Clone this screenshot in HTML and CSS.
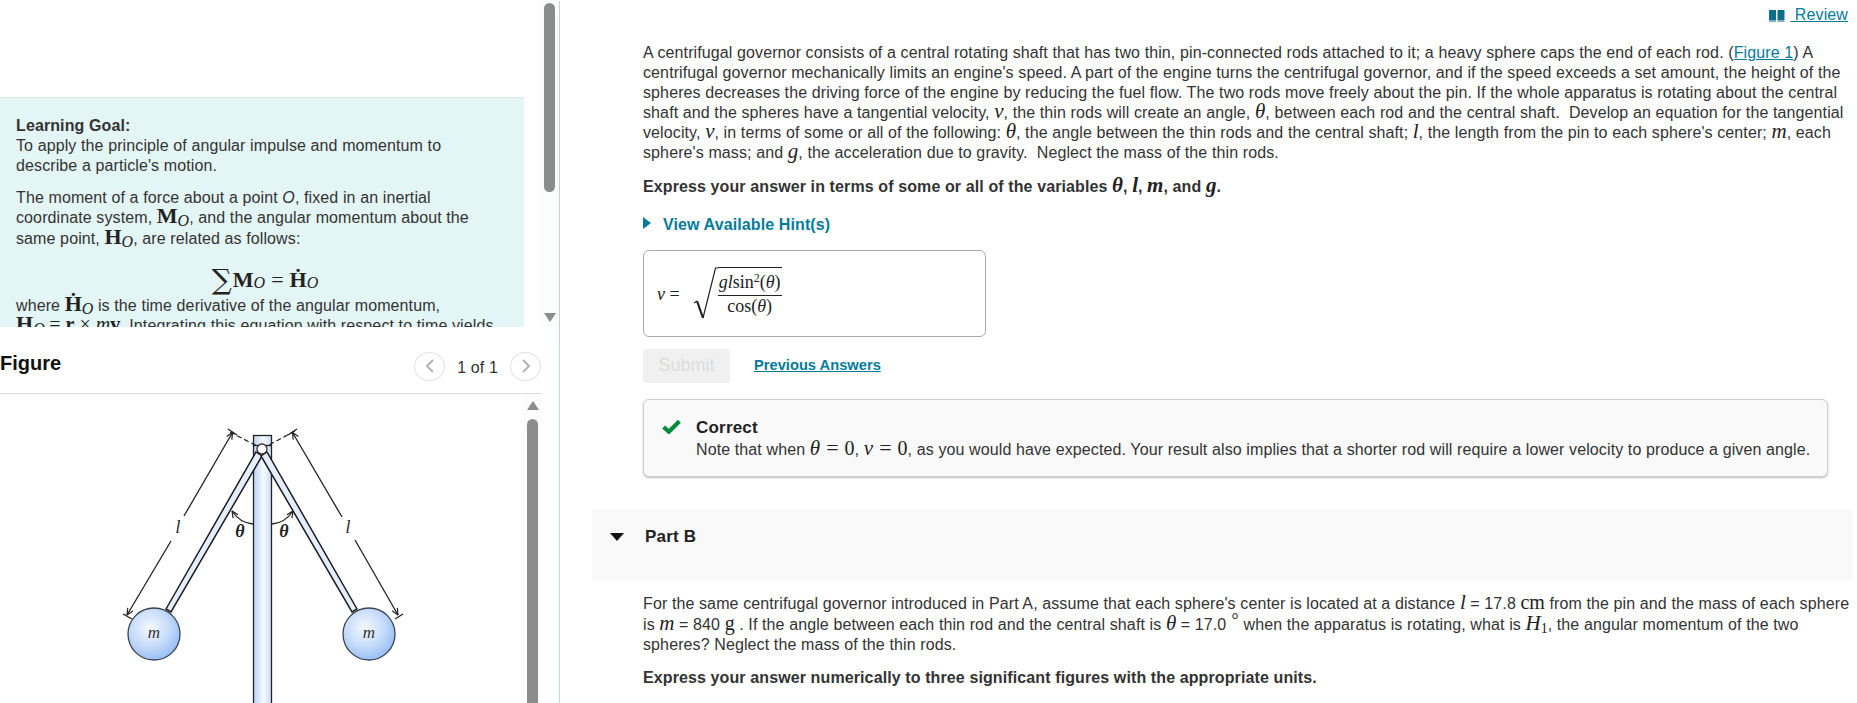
FILE: index.html
```html
<!DOCTYPE html>
<html lang="en">
<head>
<meta charset="utf-8">
<title>Centrifugal governor</title>
<link rel="stylesheet" href="styles.css">
</head>
<body>
<div class="app">
  <aside class="left">
    <section class="intro">
      <div class="intro-scroll">
        <div class="goal">
          <p class="goal-first"><b>Learning Goal:</b><br>To apply the principle of angular impulse and momentum to<br>describe a particle's motion.</p>
          <p class="goal-second">The moment of a force about a point <i>O</i>, fixed in an inertial<br>coordinate system, <span class="m mb">M</span><span class="m sub">O</span>, and the angular momentum about the<br>same point, <span class="m mb tall">H</span><span class="m sub">O</span>, are related as follows:</p>
          <div class="equation"><span class="sum">∑</span><span class="m mb">M</span><span class="m sub">O</span><span class="m eq">=</span><span class="m mb">Ḣ</span><span class="m sub">O</span></div>
          <p class="goal-third">where <span class="m mb">Ḣ</span><span class="m sub">O</span> is the time derivative of the angular momentum,<br><span class="m mb">H</span><span class="m sub">O</span> <span class="m">= <b>r</b> × <i>m</i><b>v</b></span>. Integrating this equation with respect to time yields</p>
        </div>
      </div>
      <div class="track track-down">
        <div class="thumb thumb-top"></div>
        <div class="arrow-down"></div>
      </div>
    </section>
    <section class="figure-panel">
      <header class="figure-head">
        <h2 class="figure-title">Figure</h2>
        <div class="pager">
          <span class="pager-btn"><svg class="chev" viewBox="0 0 12 16"><path d="M9 2 3 8l6 6"/></svg></span>
          <span class="pager-text">1 of 1</span>
          <span class="pager-btn"><svg class="chev" viewBox="0 0 12 16"><path d="M3 2l6 6-6 6"/></svg></span>
        </div>
      </header>
      <div class="figure-body">
        <svg class="diagram" viewBox="0 393 523 310" width="523" height="310">
          <defs>
            <linearGradient id="shaft" x1="0" x2="1" y1="0" y2="0">
              <stop offset="0" stop-color="#bcd3f5"/><stop offset=".55" stop-color="#f6faff"/><stop offset="1" stop-color="#c8dbf7"/>
            </linearGradient>
            <radialGradient id="ball" cx=".42" cy=".38" r=".68">
              <stop offset="0" stop-color="#f4f8ff"/><stop offset=".55" stop-color="#c5dbfa"/><stop offset="1" stop-color="#8fb9f2"/>
            </radialGradient>
            <marker id="tip" viewBox="0 0 8 8" refX="7.500" refY="4" markerWidth="8" markerHeight="8" orient="auto-start-reverse" markerUnits="userSpaceOnUse">
              <path class="tip" d="M1 1 7.500 4 1 7"/>
            </marker>
          </defs>
          <rect class="shaft" x="253.500" y="434.500" width="18" height="280"/>
          <path class="thin" d="M253.500 444.500h18"/>
          <path class="dash" d="M230 431 257 445M295 430 267 445"/>
          <path class="thin" d="M228 428 237 434M297 428 288 434M123 613l9 5M403 613l-8 5"/>
          <path class="thin" marker-start="url(#tip)" d="M232.500 431.500 184 515"/>
          <path class="thin" marker-end="url(#tip)" d="M171 540 127 614"/>
          <path class="thin" marker-start="url(#tip)" d="M292.500 431.500 342 516"/>
          <path class="thin" marker-end="url(#tip)" d="M355 539 398 614"/>
          <path class="thin" marker-end="url(#tip)" d="M253 523Q240 522 232 510"/>
          <path class="thin" marker-end="url(#tip)" d="M272 523Q285 522 293 510"/>
          <polygon class="rod" points="166,608 256,451 262,455 171,611"/>
          <polygon class="rod" points="357,608 267,451 261,455 352,611"/>
          <circle class="pin" cx="262" cy="448" r="5"/>
          <circle class="ball" cx="154" cy="633" r="26"/>
          <circle class="ball" cx="369" cy="633" r="26"/>
          <text class="lab lab-m" x="154" y="637">m</text>
          <text class="lab lab-m" x="369" y="637">m</text>
          <text class="lab lab-l" x="178" y="532">l</text>
          <text class="lab lab-l" x="348" y="532">l</text>
          <text class="lab lab-b" x="240" y="536">θ</text>
          <text class="lab lab-b" x="284" y="536">θ</text>
        </svg>
        <div class="track track-up">
          <div class="arrow-up"></div>
          <div class="thumb thumb-fig"></div>
        </div>
      </div>
    </section>
  </aside>
  <div class="divider"></div>
  <main class="right">
    <div class="review-row">
      <a class="review">
        <svg class="book" viewBox="0 0 16 13"><path d="M0 1h7v10.500H0zM8.500 1h7v10.500h-7z"/><path d="M0 12h7v1H0zM8.500 12h7v1h-7z" opacity=".55"/></svg>
        <span class="link">&nbsp;Review</span>
      </a>
    </div>
    <p class="text">A centrifugal governor consists of a central rotating shaft that has two thin, pin-connected rods attached to it; a heavy sphere caps the end of each rod. (<a class="link">Figure 1</a>) A<br>centrifugal governor mechanically limits an engine's speed. A part of the engine turns the centrifugal governor, and if the speed exceeds a set amount, the height of the<br>spheres decreases the driving force of the engine by reducing the fuel flow. The two rods move freely about the pin. If the whole apparatus is rotating about the central<br>shaft and the spheres have a tangential velocity, <span class="m mi">v</span>, the thin rods will create an angle, <span class="m mi">θ</span>, between each rod and the central shaft.&nbsp; Develop an equation for the tangential<br>velocity, <span class="m mi">v</span>, in terms of some or all of the following: <span class="m mi">θ</span>, the angle between the thin rods and the central shaft; <span class="m mi">l</span>, the length from the pin to each sphere's center; <span class="m mi">m</span>, each<br>sphere's mass; and <span class="m mi">g</span>, the acceleration due to gravity.&nbsp; Neglect the mass of the thin rods.</p>
    <p class="express">Express your answer in terms of some or all of the variables <span class="m mi">θ</span>, <span class="m mi">l</span>, <span class="m mi">m</span>, and <span class="m mi">g</span>.</p>
    <div class="hint"><span class="tri-right"></span><a class="hint-link">View Available Hint(s)</a></div>
    <div class="answer">
      <span class="ans-var"><i>v</i> =</span>
      <span class="radical">
        <svg class="rad-sign" viewBox="0 0 25 56" width="25" height="56"><path class="rad-thin" d="M1 36l3-2"/><path class="rad-thick" d="M4 34l6 17"/><path class="rad-thin" d="M10 51 22.500 1H25"/></svg>
        <span class="fraction">
          <span class="num"><i>gl</i>sin<sup>2</sup>(<i>θ</i>)</span>
          <span class="den">cos(<i>θ</i>)</span>
        </span>
      </span>
    </div>
    <div class="actions">
      <span class="submit">Submit</span>
      <a class="link prev">Previous Answers</a>
    </div>
    <div class="correct">
      <svg class="check" viewBox="0 0 18 14"><path d="M1.500 7.500 6.500 12 16.500 2"/></svg>
      <div class="correct-text">
        <div class="correct-title">Correct</div>
        <div>Note that when <span class="m mi">θ</span> <span class="m eq-s">=</span> <span class="m">0</span>, <span class="m mi">v</span> <span class="m eq-s">=</span> <span class="m">0</span>, as you would have expected. Your result also implies that a shorter rod will require a lower velocity to produce a given angle.</div>
      </div>
    </div>
    <div class="part-band"><span class="tri-down"></span><span class="part-title">Part B</span></div>
    <p class="text part-text">For the same centrifugal governor introduced in Part A, assume that each sphere's center is located at a distance <span class="m mi">l</span> = 17.8 <span class="m">cm</span> from the pin and the mass of each sphere<br>is <span class="m mi">m</span> = 840 <span class="m">g</span> . If the angle between each thin rod and the central shaft is <span class="m mi">θ</span> = 17.0 <span class="deg">°</span> when the apparatus is rotating, what is <span class="m mi tall">H</span><span class="m sub1">1</span>, the angular momentum of the two<br>spheres? Neglect the mass of the thin rods.</p>
    <p class="express express-b">Express your answer numerically to three significant figures with the appropriate units.</p>
  </main>
</div>
</body>
</html>
```
FILE: styles.css
```css
* { box-sizing: border-box; }
html, body { margin: 0; height: 100%; background: #fff; overflow: hidden; }
body { font: 16px/20px "Liberation Sans", Arial, sans-serif; color: #333; letter-spacing: .11px; }
p { margin: 0; }
a { text-decoration: none; }

.app { display: flex; height: 703px; overflow: hidden; }

/* left column */
.left { width: 558px; flex: none; display: flex; flex-direction: column; }
.divider { width: 2px; flex: none; background: linear-gradient(to bottom, #fff 0, #fff 1px, #c8ced8 1px, #c8ced8 343px, #c5d8ef 343px); background-size: 1px 100%; background-repeat: no-repeat; background-position: right top; }

.intro { height: 327px; display: flex; overflow: hidden; flex: none; }
.intro-scroll { width: 540px; padding: 97px 16px 0 0; flex: none; }
.goal { height: 240px; background: #e4f5f6; border-top: 1px solid #dfe9ea; padding: 18px 10px 0 16px; }
.goal-second { margin-top: 12px; }
.equation { display: flex; justify-content: center; align-items: center; height: 20px; margin: 21px 0 0; color: #222; }
.goal-third { margin-top: 6px; }

.track { width: 19px; flex: none; background: #fcfcfc; display: flex; flex-direction: column; align-items: center; }
.track-down { height: 327px; justify-content: space-between; padding: 3px 0 5px; }
.thumb { width: 11px; border-radius: 6px; background: #8c8c8c; }
.thumb-top { height: 189px; }
.thumb-fig { flex: 1; border-radius: 6px 6px 0 0; margin-top: 9px; }
.arrow-down { width: 0; height: 0; border: 6px solid transparent; border-top: 9px solid #8c8c8c; border-bottom: 0; }
.arrow-up { width: 0; height: 0; border: 6px solid transparent; border-bottom: 9px solid #8c8c8c; border-top: 0; }

.figure-panel { flex: 1; width: 542px; display: flex; flex-direction: column; min-height: 0; }
.figure-head { height: 67px; flex: none; display: flex; justify-content: space-between; align-items: center; border-bottom: 1px solid #ddd; padding: 8px 1px 0 0; background: #fff; }
.figure-title { margin: 0 0 3px; font-size: 20px; line-height: 24px; font-weight: 700; color: #111; letter-spacing: 0; }
.pager { display: flex; align-items: center; gap: 12px; margin-top: 4px; }
.pager-btn { width: 31px; height: 29px; border: 1px solid #e2e2e2; border-radius: 50%; display: flex; align-items: center; justify-content: center; }
.pager-text { color: #333; padding-top: 3px; }
.chev { width: 12px; height: 16px; fill: none; stroke: #b4b4b4; stroke-width: 2; }

.figure-body { flex: 1; display: flex; min-height: 0; }
.diagram { display: block; flex: none; background: #fff; }
.track-up { padding-top: 7px; height: 310px; }
.shaft { fill: url(#shaft); stroke: #222; stroke-width: 1.300; }
.thin { fill: none; stroke: #222; stroke-width: 1.300; }
.dash { fill: none; stroke: #222; stroke-width: 1.200; stroke-dasharray: 5 3; }
.tip { fill: none; stroke: #222; stroke-width: 1.200; }
.rod { fill: #e3edfc; stroke: #1c1c1c; stroke-width: 1.500; }
.pin { fill: #fff; stroke: #333; stroke-width: 1.300; }
.ball { fill: url(#ball); stroke: #3a4350; stroke-width: 1.300; }
.lab { font: italic 15px "Liberation Serif", serif; text-anchor: middle; fill: #333; letter-spacing: 0; }
.lab-m { font-size: 17px; }
.lab-l { font-size: 19px; }
.lab-b { font-size: 18px; font-weight: 700; fill: #222; }

/* right column */
.right { flex: 1; min-width: 0; padding: 0 4px 0 83px; overflow: hidden; }
.review-row { height: 43px; display: flex; justify-content: flex-end; align-items: flex-start; padding: 5px 5px 0 0; }
.review { display: flex; align-items: center; gap: 5px; }
.book { width: 16px; height: 13px; fill: #0b6f8c; }
.link { color: #047b9c; text-decoration: underline; }
.text { width: 1215px; color: #333; }
.m { font-family: "Liberation Serif", "DejaVu Serif", serif; font-size: 20px; line-height: 0; color: #222; letter-spacing: 0; }
.mi { font-style: italic; font-size: 21px; }
.mb { font-weight: 700; font-size: 22px; }
.tall { line-height: 18.500px; }
.sub { font-style: italic; font-size: 16px; position: relative; top: 3px; line-height: 0; }
.sub1 { font-size: 14px; position: relative; top: 3px; }
.eq { margin: 0 6px; font-size: 22px; }
.eq-s { font-size: 22px; margin: 0 1.500px; }
.sum { font: 28px/0 "DejaVu Serif", serif; color: #222; margin-right: 1px; }
.deg { font-size: 20px; line-height: 0; position: relative; top: -2px; color: #444; }

.express { margin-top: 14px; font-weight: 700; color: #333; }
.express-b { margin-top: 13px; }
.hint { margin-top: 18px; display: flex; align-items: center; gap: 12px; height: 20px; }
.tri-right { width: 0; height: 0; border: 6.500px solid transparent; border-left: 8px solid #047b9c; border-right: 0; margin-top: -4px; }
.hint-link { color: #047b9c; font-weight: 700; }

.answer { margin-top: 15px; width: 343px; height: 87px; border: 1px solid #aaa; border-radius: 6px; display: flex; align-items: center; padding-left: 13px; font-family: "Liberation Serif", serif; color: #222; letter-spacing: 0; }
.ans-var { font-size: 18px; margin-right: 13px; }
.radical { display: flex; align-items: flex-start; }
.rad-sign { display: block; fill: none; stroke: #222; margin-top: 2px; }
.rad-thin { stroke-width: 1.200; }
.rad-thick { stroke-width: 2.200; }
.fraction { display: flex; flex-direction: column; align-items: center; border-top: 1px solid #222; margin-top: 2px; font-size: 18px; line-height: 20px; padding-top: 4px; }
.num { border-bottom: 1px solid #222; padding: 0 1px 1px; height: 24px; }
.num sup { font-size: 12px; line-height: 0; vertical-align: 6px; }
.den { padding-top: 0; }

.actions { margin-top: 12px; height: 34px; display: flex; align-items: center; gap: 24px; }
.submit { width: 87px; height: 34px; background: #f0f0f0; color: #dcdcdc; font-size: 18px; line-height: 33px; text-align: center; border-radius: 2px; letter-spacing: 0; }
.prev { font-weight: 700; font-size: 14.700px; letter-spacing: 0; padding-bottom: 2px; }

.correct { margin-top: 16px; width: 1185px; height: 78px; border: 1px solid #cfcfcf; border-radius: 6px; background: #f9f9f9; box-shadow: 0 1px 2px #bbb; display: flex; padding: 18px 0 0 18px; gap: 15px; }
.check { width: 19px; height: 15px; fill: none; stroke: #0a8a3f; stroke-width: 4; margin-top: 1px; flex: none; }
.correct-title { font-weight: 700; font-size: 17px; letter-spacing: .2px; color: #222; margin-bottom: 2px; }

.part-band { margin: 32px 0 0 -51px; width: 1261px; height: 71px; background: #f9f9f9; display: flex; align-items: flex-start; padding: 18px 0 0 18px; gap: 21px; }
.tri-down { width: 0; height: 0; border: 7px solid transparent; border-top: 8px solid #111; border-bottom: 0; margin-top: 6px; }
.part-title { font-weight: 700; font-size: 17px; letter-spacing: .2px; color: #222; }
.part-text { margin-top: 14px; }
```
